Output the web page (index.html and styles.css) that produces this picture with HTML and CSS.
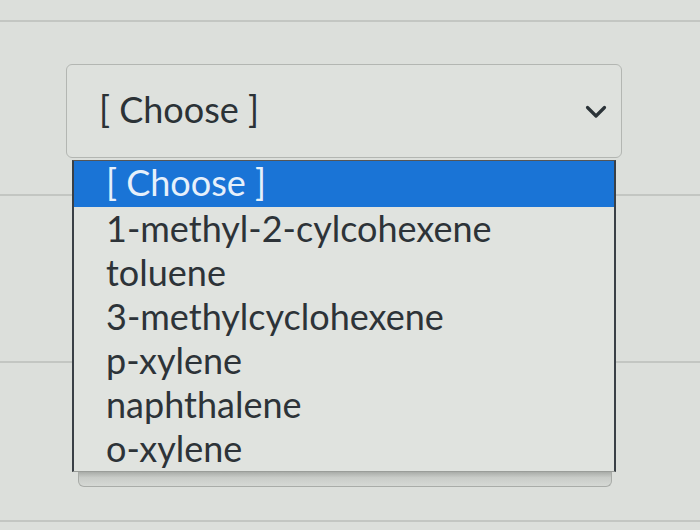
FILE: index.html
```html
<!DOCTYPE html>
<html>
<head>
<meta charset="utf-8">
<link rel="stylesheet" href="styles.css">
</head>
<body>
<div class="page">
  <div class="rule-row top"></div>
  <div class="question-row">
    <div class="select">
      <span class="select-value">[ Choose ]</span>
      <svg class="chevron" width="22" height="14" viewBox="0 0 22 14"><path d="M2.5 2.5 L11 11 L19.5 2.5" fill="none" stroke="#2b3338" stroke-width="3.2" stroke-linecap="round" stroke-linejoin="round"/></svg>
    </div>
  </div>
  <div class="rule-row mid"></div>
  <div class="rule-row low"></div>
</div>
<div class="popup">
  <ul class="options">
    <li class="option selected">[ Choose ]</li>
    <li class="option">1-methyl-2-cylcohexene</li>
    <li class="option">toluene</li>
    <li class="option">3-methylcyclohexene</li>
    <li class="option">p-xylene</li>
    <li class="option">naphthalene</li>
    <li class="option">o-xylene</li>
  </ul>
  <div class="popup-shadow"></div>
</div>
</body>
</html>
```
FILE: styles.css
```css
html, body {
  margin: 0;
  padding: 0;
}
body {
  width: 700px;
  height: 530px;
  background: #dcdfdb;
  font-family: Lato, "Open Sans", sans-serif;
  color: #2d3338;
  position: relative;
  overflow: hidden;
}
.page {
  display: flex;
  flex-direction: column;
}
.rule-row {
  border-bottom: 2px solid #c3c6c2;
}
.rule-row.top {
  height: 20px;
}
.question-row {
  height: 174px;
  padding: 42px 0 0 66px;
  box-sizing: border-box;
  border-bottom: 2px solid #c3c6c2;
}
.rule-row.mid {
  height: 165px;
}
.rule-row.low {
  height: 157px;
}
.select {
  width: 556px;
  height: 94px;
  box-sizing: border-box;
  border: 1px solid #b3b6b2;
  border-radius: 6px;
  display: flex;
  align-items: center;
  justify-content: space-between;
  padding: 0 14px 0 32px;
  background: #dee1dd;
}
.select-value {
  font-size: 36px;
  color: #2b3236;
  padding-bottom: 4px;
}
.chevron {
  margin-top: 2px;
}
.popup {
  position: absolute;
  left: 72px;
  top: 160px;
  width: 544px;
}
.options {
  list-style: none;
  margin: 0;
  padding: 0;
  background: #e0e3df;
  border: 2px solid #3a4046;
  border-top: 1px solid #555;
  border-bottom: 1px solid #9a9d99;
  position: relative;
  z-index: 2;
}
.option {
  height: 44px;
  line-height: 42px;
  padding-left: 32px;
  font-size: 36px;
  color: #2d3338;
}
.option.selected {
  height: 46px;
  line-height: 42px;
  background: #1a74d6;
  color: #e6f0fb;
}
.popup-shadow {
  margin: 0 4px 0 6px;
  height: 14px;
  border: 1px solid #a9aca8;
  border-top: none;
  border-radius: 0 0 6px 6px;
  background: linear-gradient(#a9aca8, #c9ccc8 40%, #d6d9d5);
}
```
